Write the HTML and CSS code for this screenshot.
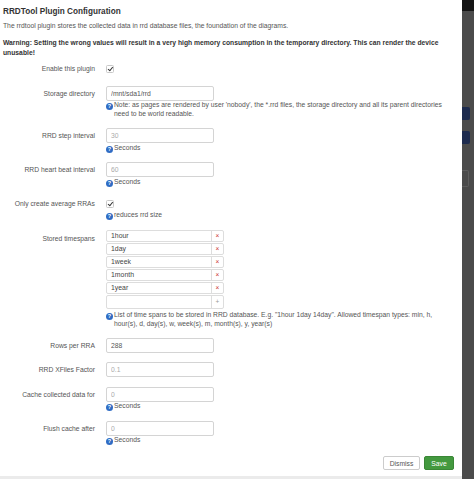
FILE: index.html
```html
<!DOCTYPE html>
<html lang="en">
<head>
    <meta charset="UTF-8">
    <meta name="viewport" content="width=device-width, initial-scale=1.0">
    <title>RRDTool Plugin Configuration</title>
    <link rel="stylesheet" href="styles.css">
</head>
<body>
    <div class="screen">
        <div class="modal-col">
            <section class="modal">
                <h3 class="title">RRDTool Plugin Configuration</h3>
                <p class="desc">The rrdtool plugin stores the collected data in rrd database files, the foundation of the diagrams.</p>
                <p class="warn">Warning: Setting the wrong values will result in a very high memory consumption in the temporary directory. This can render the device unusable!</p>

                <div class="form">
                    <!-- Enable -->
                    <div class="row">
                        <label class="row-label">Enable this plugin</label>
                        <div class="row-field">
                            <span class="check checked"></span>
                        </div>
                    </div>

                    <div class="row">
                        <label class="row-label">Storage directory</label>
                        <div class="row-field">
                            <input class="text" type="text" value="/mnt/sda1/rrd">
                            <div class="help"><span class="q">?</span>Note: as pages are rendered by user 'nobody', the *.rrd files, the storage directory and all its parent directories need to be world readable.</div>
                        </div>
                    </div>

                    <div class="row">
                        <label class="row-label">RRD step interval</label>
                        <div class="row-field">
                            <input class="text" type="text" placeholder="30">
                            <div class="help"><span class="q">?</span>Seconds</div>
                        </div>
                    </div>

                    <div class="row">
                        <label class="row-label">RRD heart beat interval</label>
                        <div class="row-field">
                            <input class="text" type="text" placeholder="60">
                            <div class="help"><span class="q">?</span>Seconds</div>
                        </div>
                    </div>

                    <div class="row">
                        <label class="row-label">Only create average RRAs</label>
                        <div class="row-field">
                            <span class="check checked"></span>
                            <div class="help"><span class="q">?</span>reduces rrd size</div>
                        </div>
                    </div>

                    <!-- Dynamic list -->
                    <div class="row">
                        <label class="row-label label-list">Stored timespans</label>
                        <div class="row-field">
                            <div class="dlist">
                                <div class="item"><span class="item-val">1hour</span><span class="item-btn">&times;</span></div>
                                <div class="item"><span class="item-val">1day</span><span class="item-btn">&times;</span></div>
                                <div class="item"><span class="item-val">1week</span><span class="item-btn">&times;</span></div>
                                <div class="item"><span class="item-val">1month</span><span class="item-btn">&times;</span></div>
                                <div class="item"><span class="item-val">1year</span><span class="item-btn">&times;</span></div>
                                <div class="item item-add"><span class="item-val"></span><span class="item-btn">+</span></div>
                            </div>
                            <div class="help"><span class="q">?</span>List of time spans to be stored in RRD database. E.g. "1hour 1day 14day". Allowed timespan types: min, h, hour(s), d, day(s), w, week(s), m, month(s), y, year(s)</div>
                        </div>
                    </div>

                    <div class="row">
                        <label class="row-label">Rows per RRA</label>
                        <div class="row-field">
                            <input class="text" type="text" value="288">
                        </div>
                    </div>

                    <div class="row">
                        <label class="row-label">RRD XFiles Factor</label>
                        <div class="row-field">
                            <input class="text" type="text" placeholder="0.1">
                        </div>
                    </div>

                    <div class="row">
                        <label class="row-label">Cache collected data for</label>
                        <div class="row-field">
                            <input class="text" type="text" placeholder="0">
                            <div class="help"><span class="q">?</span>Seconds</div>
                        </div>
                    </div>

                    <div class="row">
                        <label class="row-label">Flush cache after</label>
                        <div class="row-field">
                            <input class="text" type="text" placeholder="0">
                            <div class="help"><span class="q">?</span>Seconds</div>
                        </div>
                    </div>
                </div>

                <div class="footer">
                    <button class="btn btn-dismiss" type="button">Dismiss</button>
                    <button class="btn btn-save" type="button">Save</button>
                </div>
            </section>
            <div class="page-strip"></div>
        </div>

        <!-- darkened page behind the dialog -->
        <div class="backdrop">
            <div class="bd-top"></div>
            <div class="bd-btn bd-btn-1"></div>
            <div class="bd-btn bd-btn-2"></div>
            <div class="bd-outline"></div>
        </div>
    </div>
</body>
</html>
```

FILE: styles.css
```css
body {
    margin: 0;
    padding: 0;
    font-family: "Liberation Sans", Arial, sans-serif;
    font-size: 6.75px;
    color: #555;
    background: #4b4b4b;
    overflow: hidden;
}

.screen {
    display: flex;
    width: 474px;
    height: 479px;
}

.modal-col {
    width: 462px;
    display: flex;
    flex-direction: column;
}

.modal {
    height: 476px;
    background: #fff;
    padding: 5.5px 8px 0 3px;
    box-sizing: border-box;
    display: flex;
    flex-direction: column;
}

.page-strip {
    flex: 1;
    background: #ebebeb;
}

.title {
    margin: 0;
    font-size: 8.2px;
    line-height: 12px;
    font-weight: bold;
    color: #333;
}

.desc {
    margin: 3.5px 0 0;
    line-height: 9px;
    color: #555;
}

.warn {
    margin: 8px 0 0;
    line-height: 9.5px;
    font-weight: bold;
    color: #333;
}

.form {
    display: flex;
    flex-direction: column;
    gap: 9.5px;
    margin-top: 4px;
}

.row {
    display: flex;
}

.row-label {
    width: 92px;
    flex: none;
    text-align: right;
    line-height: 15px;
    color: #555;
}

.label-list {
    margin-top: 1px;
}

.row-field {
    margin-left: 11px;
    flex: 1;
    min-height: 15px;
}

.text {
    display: block;
    width: 108px;
    height: 15px;
    box-sizing: border-box;
    border: 1px solid #d4d4d4;
    border-radius: 2px;
    padding: 0 4px;
    font-family: inherit;
    font-size: 6.75px;
    color: #555;
    outline: none;
}

.text::placeholder {
    color: #aaa;
}

.check {
    display: block;
    width: 8px;
    height: 8px;
    margin: 3.5px 0;
    border: 1px solid #c8c8c8;
    border-radius: 1.5px;
    box-sizing: border-box;
    position: relative;
}

.check.checked::after {
    content: "";
    position: absolute;
    left: 1.8px;
    top: 0.6px;
    width: 2px;
    height: 3.6px;
    border: solid #333;
    border-width: 0 1.1px 1.1px 0;
    transform: rotate(40deg);
}

.help {
    margin-top: 0.5px;
    line-height: 8.5px;
    color: #555;
    padding-left: 8px;
    text-indent: -8px;
    padding-right: 4px;
}

.q {
    display: inline-block;
    width: 7px;
    height: 7px;
    border-radius: 50%;
    background: #2f6cc4;
    color: #fff;
    font-size: 5.5px;
    font-weight: bold;
    line-height: 7px;
    text-align: center;
    text-indent: 0;
    vertical-align: -1px;
    margin-right: 1px;
}

.dlist {
    width: 118px;
    display: flex;
    flex-direction: column;
    gap: 1px;
    margin-bottom: 2px;
}

.item {
    display: flex;
    height: 12px;
    border: 1px solid #ddd;
    border-radius: 2px;
    box-sizing: border-box;
}

.item-val {
    flex: 1;
    padding-left: 4px;
    line-height: 10px;
    color: #444;
    font-size: 6.9px;
}

.item-btn {
    width: 11px;
    border-left: 1px solid #ddd;
    text-align: center;
    line-height: 10px;
    color: #c9302c;
    font-size: 6.5px;
}

.item-add {
    height: 14px;
}

.item-add .item-btn {
    color: #999;
    line-height: 12px;
}

.footer {
    margin-top: auto;
    margin-bottom: 6px;
    display: flex;
    justify-content: flex-end;
    gap: 4px;
}

.btn {
    height: 14px;
    font-family: inherit;
    font-size: 6.75px;
    border-radius: 2px;
    padding: 0;
    cursor: pointer;
}

.btn-dismiss {
    width: 37px;
    background: #fff;
    border: 1px solid #ccc;
    color: #555;
}

.btn-save {
    width: 30px;
    background: #43993f;
    border: 1px solid #3a8736;
    color: #fff;
}

.backdrop {
    flex: 1;
    background: #4b4b4b;
    display: flex;
    flex-direction: column;
}

.bd-top {
    height: 11px;
    background: #151515;
}

.bd-btn {
    width: 8px;
    height: 13px;
    background: #1d2b4e;
    border-radius: 0 2px 2px 0;
}

.bd-btn-1 {
    margin-top: 96px;
}

.bd-btn-2 {
    margin-top: 11px;
}

.bd-outline {
    width: 6px;
    height: 15px;
    margin-top: 26px;
    border: 1px solid #5e5e5e;
    border-left: none;
    border-radius: 0 2px 2px 0;
}
```
